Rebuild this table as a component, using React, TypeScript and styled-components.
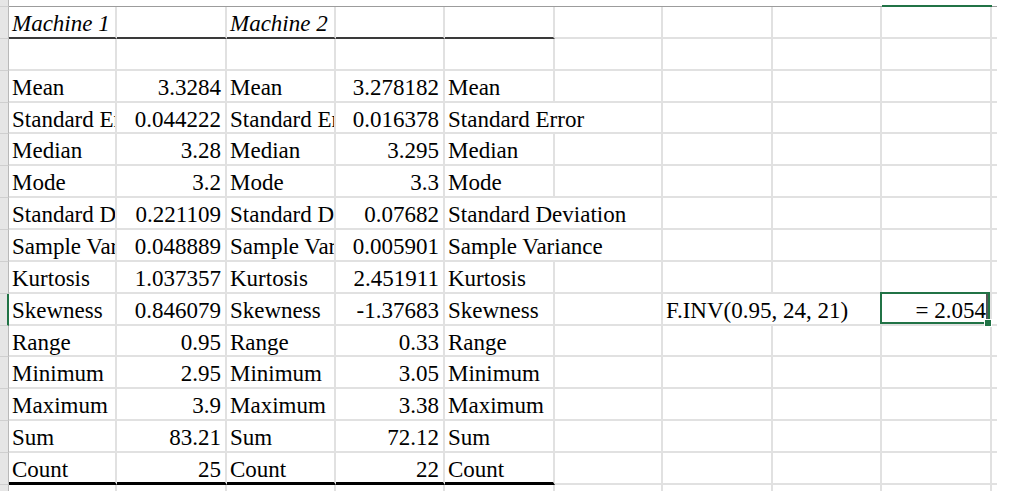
import styled, { createGlobalStyle } from 'styled-components';

const GlobalStyle = createGlobalStyle`
  html, body {
    margin: 0;
    padding: 0;
    background: #ffffff;
  }
`;

const COLUMN_WIDTHS = [108, 110, 109, 109, 110, 108, 110, 109, 110];
const GRID = '#e1e1e1';
const EXCEL_GREEN = '#217346';

type Rule = 'none' | 'head' | 'foot';

type CellSpec = {
  text?: string;
  num?: boolean;
  italic?: boolean;
  span?: number;
  rule?: Rule;
  selected?: boolean;
};

const Sheet = styled.div`
  display: grid;
  grid-template-columns: 9px ${COLUMN_WIDTHS.map((w) => `${w}px`).join(' ')} 5px;
  grid-template-rows: 7px repeat(15, 31.87px) 6px;
  width: 997px;
  overflow: hidden;
  font-family: 'Liberation Serif', 'Times New Roman', serif;
  font-size: 23px;
  color: #000;
`;

const RowHeader = styled.div<{ $active?: boolean; $last?: boolean }>`
  box-sizing: border-box;
  background: #e6e6e6;
  border-right: ${(p) => (p.$active ? `2px solid ${EXCEL_GREEN}` : '1px solid #b9b9b9')};
  border-bottom: ${(p) => (p.$last ? 'none' : '1px solid #cfcfcf')};
`;

const ColumnHeader = styled.div<{ $active?: boolean }>`
  box-sizing: border-box;
  background: #ffffff;
  border-bottom: ${(p) => (p.$active ? `2px solid ${EXCEL_GREEN}` : '1px solid #9c9c9c')};
`;

const ruleBorder = (rule?: Rule) => {
  if (rule === 'head') return '2px solid #3a3a3a';
  if (rule === 'foot') return '3px solid #000000';
  return `2px solid ${GRID}`;
};

const Cell = styled.div<{ $num?: boolean; $italic?: boolean; $span?: number; $rule?: Rule; $edge?: boolean; $tail?: boolean }>`
  box-sizing: border-box;
  grid-column: span ${(p) => p.$span ?? 1};
  border-right: ${(p) => (p.$edge ? 'none' : `2px solid ${GRID}`)};
  border-bottom: ${(p) => (p.$tail ? 'none' : ruleBorder(p.$rule))};
  padding: 4px 4px 0 3px;
  line-height: 26px;
  white-space: nowrap;
  overflow: hidden;
  text-align: ${(p) => (p.$num ? 'right' : 'left')};
  font-style: ${(p) => (p.$italic ? 'italic' : 'normal')};
`;

const ActiveCell = styled(Cell)`
  position: relative;
  overflow: visible;

  &::after {
    content: '';
    position: absolute;
    left: -2px;
    top: -2px;
    right: 0;
    bottom: 0;
    border: 2px solid ${EXCEL_GREEN};
  }

  &::before {
    content: '';
    position: absolute;
    right: -2px;
    bottom: -3px;
    width: 6px;
    height: 6px;
    background: ${EXCEL_GREEN};
    border: 1px solid #ffffff;
    z-index: 1;
  }
`;

const Caret = styled.span`
  position: absolute;
  right: 2px;
  top: 0;
  bottom: 3px;
  width: 2px;
  background: #555555;
`;

const stats: [string, string, string][] = [
  ['Mean', '3.3284', '3.278182'],
  ['Standard Error', '0.044222', '0.016378'],
  ['Median', '3.28', '3.295'],
  ['Mode', '3.2', '3.3'],
  ['Standard Deviation', '0.221109', '0.07682'],
  ['Sample Variance', '0.048889', '0.005901'],
  ['Kurtosis', '1.037357', '2.451911'],
  ['Skewness', '0.846079', '-1.37683'],
  ['Range', '0.95', '0.33'],
  ['Minimum', '2.95', '3.05'],
  ['Maximum', '3.9', '3.38'],
  ['Sum', '83.21', '72.12'],
  ['Count', '25', '22'],
];

const LONG_LABELS = ['Standard Error', 'Standard Deviation', 'Sample Variance'];

const fill = (cells: CellSpec[]) => {
  const used = cells.reduce((n, c) => n + (c.span ?? 1), 0);
  return [...cells, ...Array.from({ length: 9 - used }, () => ({}))];
};

const buildRows = (): CellSpec[][] => {
  const rows: CellSpec[][] = [];
  rows.push(
    fill([
      { text: 'Machine 1', italic: true, rule: 'head' },
      { rule: 'head' },
      { text: 'Machine 2', italic: true, rule: 'head' },
      { rule: 'head' },
      { rule: 'head' },
    ])
  );
  rows.push(fill([]));
  stats.forEach(([label, a, b], i) => {
    const rule: Rule = i === stats.length - 1 ? 'foot' : 'none';
    const row: CellSpec[] = [
      { text: label, rule },
      { text: a, num: true, rule },
      { text: label, rule },
      { text: b, num: true, rule },
      { text: label, rule, span: LONG_LABELS.includes(label) ? 2 : 1 },
    ];
    if (label === 'Skewness') {
      row.push({}, { text: 'F.INV(0.95, 24, 21)', span: 2 }, { text: '= 2.054', num: true, selected: true });
    }
    rows.push(fill(row));
  });
  return rows;
};

const rows = buildRows();
const ACTIVE_ROW = 2 + stats.findIndex(([l]) => l === 'Skewness');

const App = () => {
  return (
    <>
      <GlobalStyle />
      <Sheet>
        <RowHeader />
        {COLUMN_WIDTHS.map((_, c) => (
          <ColumnHeader key={`h${c}`} $active={c === 8} />
        ))}
        <ColumnHeader />

        {rows.map((row, r) => [
          <RowHeader key={`r${r}`} $active={r === ACTIVE_ROW} />,
          ...row.map((cell, c) =>
            cell.selected ? (
              <ActiveCell key={`${r}-${c}`} $num={cell.num}>
                {cell.text}
                <Caret />
              </ActiveCell>
            ) : (
              <Cell
                key={`${r}-${c}`}
                $num={cell.num}
                $italic={cell.italic}
                $span={cell.span}
                $rule={cell.rule}
              >
                {cell.text}
              </Cell>
            )
          ),
          <Cell key={`e${r}`} $edge />,
        ])}

        <RowHeader $last />
        {COLUMN_WIDTHS.map((_, c) => (
          <Cell key={`t${c}`} $tail />
        ))}
        <Cell $edge $tail />
      </Sheet>
    </>
  );
};

export default App;
